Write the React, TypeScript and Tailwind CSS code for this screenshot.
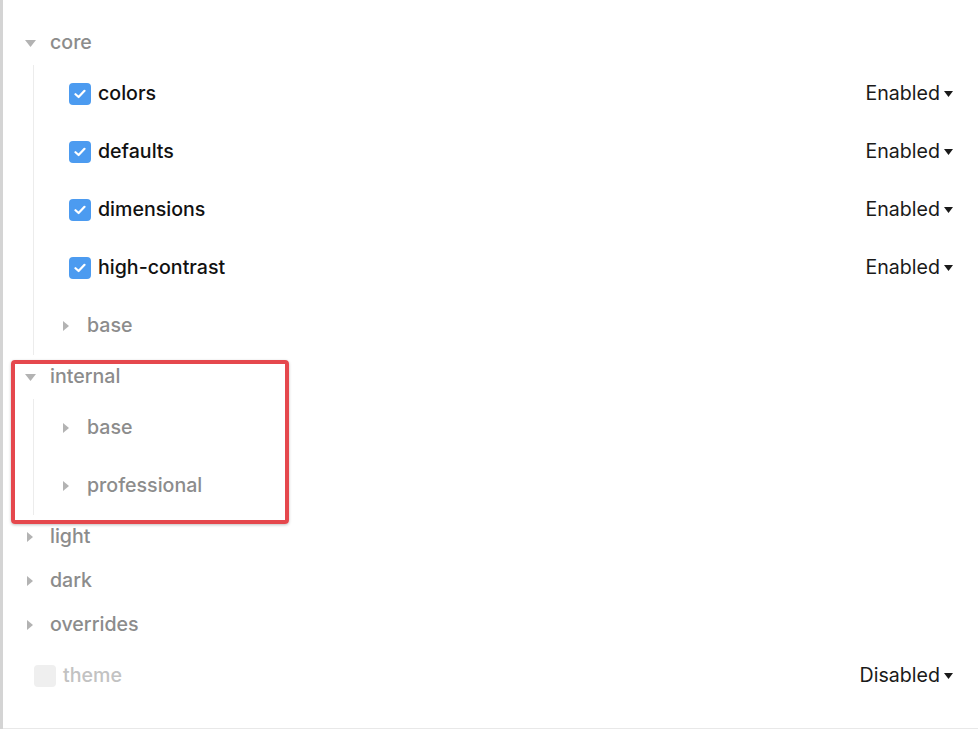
import { ReactNode } from "react"

const font = { fontFamily: "Inter, 'Noto Sans', sans-serif" }

function CaretDown() {
  return (
    <svg width="11" height="7" viewBox="0 0 11 7" className="shrink-0">
      <path d="M0 0 H11 L5.5 7 Z" fill="#b3b3b3" />
    </svg>
  )
}

function CaretRight() {
  return (
    <svg width="7" height="10" viewBox="0 0 7 10" className="shrink-0">
      <path d="M0 0 L6 5 L0 10 Z" fill="#b3b3b3" />
    </svg>
  )
}

function Check({ on = true }: { on?: boolean }) {
  if (!on) return <span className="w-[22px] h-[22px] rounded-[4px] bg-[#efefef] shrink-0" />
  return (
    <span className="w-[22px] h-[22px] rounded-[4px] bg-[#4c9bf0] flex items-center justify-center shrink-0">
      <svg width="12" height="10" viewBox="0 0 12 10">
        <path d="M1.5 5.2 L4.6 8 L10.5 1.8" fill="none" stroke="#fff" strokeWidth="2.2" strokeLinecap="round" strokeLinejoin="round" />
      </svg>
    </span>
  )
}

function Select({ value }: { value: string }) {
  return (
    <span className="ml-auto flex items-center gap-[4px] text-[19.6px] text-[#1a1a1a] pr-[25px]">
      {value}
      <svg width="9" height="6" viewBox="0 0 9 6">
        <path d="M0 0 H9 L4.5 6 Z" fill="#1a1a1a" />
      </svg>
    </span>
  )
}

function Group({ label, open, children }: { label: string; open?: boolean; children?: ReactNode }) {
  return (
    <div>
      <div className="h-[44px] flex items-center pl-[21px]">
        <span className="w-[12px] flex justify-center">{open ? <CaretDown /> : <CaretRight />}</span>
        <span className="ml-[14px] text-[19.6px] font-medium text-[#8c8c8c]">{label}</span>
      </div>
      {open && <div className="ml-[30px] border-l border-[#ececec]">{children}</div>}
    </div>
  )
}

function SubGroup({ label }: { label: string }) {
  return (
    <div className="h-[58px] flex items-center pl-[29px]">
      <CaretRight />
      <span className="ml-[17px] text-[19.6px] font-medium text-[#8c8c8c]">{label}</span>
    </div>
  )
}

function SetRow({ label, value }: { label: string; value: string }) {
  return (
    <div className="h-[58px] flex items-center pl-[35px]">
      <Check />
      <span className="ml-[7px] text-[19.6px] font-medium text-[#111]">{label}</span>
      <Select value={value} />
    </div>
  )
}

export default function App() {
  return (
    <div style={font} className="relative w-[980px] h-[730px] bg-white">
      <div className="h-[729px] border-l-[3px] border-[#d4d4d4]">
        <div className="pt-[21px] mr-[2px] border-b border-[#e8e8e8] h-[729px]">
          <Group label="core" open>
            <SetRow label="colors" value="Enabled" />
            <SetRow label="defaults" value="Enabled" />
            <SetRow label="dimensions" value="Enabled" />
            <SetRow label="high-contrast" value="Enabled" />
            <SubGroup label="base" />
          </Group>
          <Group label="internal" open>
            <SubGroup label="base" />
            <SubGroup label="professional" />
          </Group>
          <Group label="light" />
          <Group label="dark" />
          <Group label="overrides" />
          <div className="h-[58px] flex items-center pl-[31px]">
            <Check on={false} />
            <span className="ml-[7px] text-[19.6px] font-medium text-[#c2c2c2]">theme</span>
            <span className="ml-auto flex items-center gap-[4px] text-[19.6px] text-[#1a1a1a] pr-[25px]">
              Disabled
              <svg width="9" height="6" viewBox="0 0 9 6">
                <path d="M0 0 H9 L4.5 6 Z" fill="#1a1a1a" />
              </svg>
            </span>
          </div>
        </div>
      </div>
      {/* annotation box */}
      <div className="absolute left-[11px] top-[360px] w-[278px] h-[164px] border-4 border-[#e5484d] rounded-[4px] shadow-[0_1px_3px_rgba(0,0,0,0.25)]" />
    </div>
  )
}
